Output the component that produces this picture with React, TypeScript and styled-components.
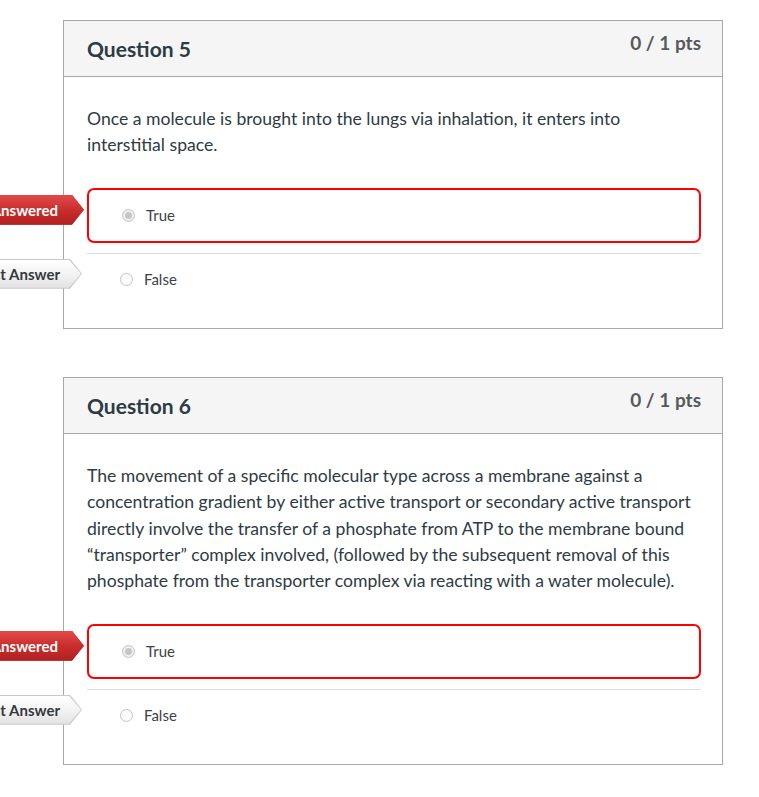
import React from "react";
import styled, { createGlobalStyle, css } from "styled-components";

const GlobalStyle = createGlobalStyle`
  html, body { margin: 0; padding: 0; background: #ffffff; }
  body { font-family: Lato, "Open Sans", Arial, sans-serif; color: #2d3b45; overflow-x: hidden; }
`;

const Page = styled.div`
  display: flex;
  flex-direction: column;
  gap: 48px;
  padding: 20px 0 32px 63px;
`;

const Card = styled.section`
  width: 658px;
  border: 1px solid #a8a8a8;
  background: #fff;
`;

const Header = styled.header`
  display: flex;
  justify-content: space-between;
  align-items: flex-start;
  height: 56px;
  background: #f5f5f5;
  border-bottom: 1px solid #a8a8a8;
  padding: 0 21px 0 23px;
  box-sizing: border-box;
`;

const Title = styled.h2`
  margin: 0;
  padding-top: 15px;
  font-size: 21px;
  line-height: 26px;
  font-weight: 700;
  color: #2d3b45;
`;

const Points = styled.div`
  padding-top: 11px;
  font-size: 19px;
  line-height: 22px;
  font-weight: 700;
  color: #555a5e;
`;

const Body = styled.div`
  padding: 29px 21px 23px 23px;
`;

const QuestionText = styled.p`
  margin: 0;
  font-size: 17.6px;
  line-height: 26.4px;
  color: #2d3b45;
`;

const Answers = styled.div`
  margin-top: 29px;
  display: flex;
  flex-direction: column;
`;

const AnswerRow = styled.div<{ $selected?: boolean }>`
  position: relative;
  display: flex;
  align-items: center;
  gap: 11px;
  padding-left: 33px;
  box-sizing: border-box;
  ${(p) =>
    p.$selected
      ? css`
          height: 55px;
          border: 2px solid #f00;
          border-radius: 7px;
        `
      : css`
          height: 52px;
          margin-top: 10px;
          border-top: 1px solid #dcdcdc;
        `}
`;

const Radio = styled.span<{ $checked?: boolean }>`
  width: 13px;
  height: 13px;
  box-sizing: border-box;
  border-radius: 50%;
  border: 1px solid #c4c4c4;
  background: ${(p) => (p.$checked ? "#efefef" : "#fbfbfb")};
  display: flex;
  align-items: center;
  justify-content: center;
  flex: none;
  &::after {
    content: "";
    display: ${(p) => (p.$checked ? "block" : "none")};
    width: 7px;
    height: 7px;
    border-radius: 50%;
    background: #c6c6c6;
  }
`;

const Label = styled.span`
  font-size: 15px;
  line-height: 18px;
  color: #3c4247;
`;

const TagOuter = styled.div<{ $variant: "wrong" | "correct" }>`
  position: absolute;
  right: calc(100% + 5px);
  top: 5px;
  height: 30px;
  padding: ${(p) => (p.$variant === "correct" ? "1px" : "0")};
  box-sizing: border-box;
  clip-path: polygon(0 0, calc(100% - 12px) 0, 100% 50%, calc(100% - 12px) 100%, 0 100%);
  background: ${(p) => (p.$variant === "correct" ? "#c9c9c9" : "#b32222")};
  display: flex;
`;

const TagFace = styled.div<{ $variant: "wrong" | "correct" }>`
  display: flex;
  align-items: center;
  white-space: nowrap;
  font-size: 15px;
  font-weight: 700;
  clip-path: polygon(0 0, calc(100% - 12px) 0, 100% 50%, calc(100% - 12px) 100%, 0 100%);
  ${(p) =>
    p.$variant === "correct"
      ? css`
          padding: 0 21px 0 12px;
          color: #333a40;
          background: linear-gradient(#ffffff, #f3f3f3 50%, #e2e2e2);
        `
      : css`
          padding: 0 26px 0 12px;
          color: #ffffff;
          background: linear-gradient(#e24a4a, #c92e2e 50%, #b02020);
        `}
`;

function Tag({ variant, children }: { variant: "wrong" | "correct"; children: React.ReactNode }) {
  return (
    <TagOuter $variant={variant}>
      <TagFace $variant={variant}>{children}</TagFace>
    </TagOuter>
  );
}

type Q = { n: number; text: string };

const questions: Q[] = [
  {
    n: 5,
    text: "Once a molecule is brought into the lungs via inhalation, it enters into interstitial space.",
  },
  {
    n: 6,
    text:
      "The movement of a specific molecular type across a membrane against a concentration gradient by either active transport or secondary active transport directly involve the transfer of a phosphate from ATP to the membrane bound \u201ctransporter\u201d complex involved, (followed by the subsequent removal of this phosphate from the transporter complex via reacting with a water molecule).",
  },
];

function QuestionCard({ q }: { q: Q }) {
  return (
    <Card>
      <Header>
        <Title>Question {q.n}</Title>
        <Points>0 / 1 pts</Points>
      </Header>
      <Body>
        <QuestionText>{q.text}</QuestionText>
        <Answers>
          <AnswerRow $selected>
            <Tag variant="wrong">You Answered</Tag>
            <Radio $checked />
            <Label>True</Label>
          </AnswerRow>
          <AnswerRow>
            <Tag variant="correct">Correct Answer</Tag>
            <Radio />
            <Label>False</Label>
          </AnswerRow>
        </Answers>
      </Body>
    </Card>
  );
}

export default function App() {
  return (
    <>
      <GlobalStyle />
      <Page>
        {questions.map((q) => (
          <QuestionCard key={q.n} q={q} />
        ))}
      </Page>
    </>
  );
}
